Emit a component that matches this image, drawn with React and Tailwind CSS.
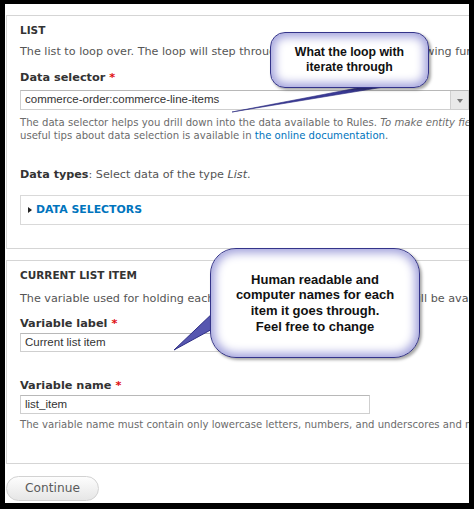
const body = "text-[11.2px] leading-[16px] text-[#555]";
const label = "text-[11.3px] font-bold leading-[16px] text-[#333]";
const title = "text-[10.5px] font-bold uppercase leading-[14px] text-[#333]";
const desc = "text-[10.1px] leading-[13px] text-[#6b6b6b] whitespace-nowrap";

function Required() {
  return <span className="text-[#e01010]"> *</span>;
}

function TextInput({ value, width }) {
  return (
    <div
      className={`${width} mt-px flex h-[19px] items-center border border-[#cfcfcf] border-t-[#b8b8b8] bg-white px-[4px] font-['Liberation_Sans',Arial,sans-serif] text-[11.5px] text-[#333]`}
    >
      {value}
    </div>
  );
}

function Callout({ className, children }) {
  return (
    <div
      className={`absolute flex items-center justify-center border-[1.5px] border-[#34348a] bg-white text-center font-['Liberation_Sans',Arial,sans-serif] font-bold text-[#111] shadow-[inset_0_0_10px_4px_#a3a3dc,2px_2px_3px_rgba(0,0,0,0.35)] ${className}`}
    >
      {children}
    </div>
  );
}

export default function App() {
  return (
    <div className="relative h-[509px] w-[474px] overflow-hidden bg-black pl-[5px] pt-[4px] font-['DejaVu_Sans',Verdana,sans-serif]">
      <div className="h-[499px] w-[464px] overflow-hidden bg-white">
        {/* LIST */}
        <div className="ml-px mt-[11px] w-[520px] border border-[#d5d5d5] px-[13px] pb-[23px] pt-[7px]">
          <div className={title}>List</div>
          <p className={`${body} mt-[7px] whitespace-nowrap`}>
            The list to loop over. The loop will step through each item in the list, allowing further actions on them.
          </p>
          <div className={`${label} mt-[10px]`}>
            Data selector<Required />
          </div>
          <div className="mt-[4px] flex h-[20px] w-[449px] border border-[#cfcfcf] border-t-[#b8b8b8] bg-white">
            <div className="flex flex-1 items-center px-[4px] font-['Liberation_Sans',Arial,sans-serif] text-[11.5px] text-[#333]">
              commerce-order:commerce-line-items
            </div>
            <div className="flex w-[18px] items-center justify-center border-l border-[#d0d0d0] bg-[#e9e9e9]">
              <span className="mt-px border-x-[3px] border-t-[4px] border-x-transparent border-t-[#777]" />
            </div>
          </div>
          <div className="mt-[6px]">
            <p className={desc}>
              The data selector helps you drill down into the data available to Rules.{" "}
              <em>To make entity fields appear in the data selector, you may have to use the condition 'entity has field'. More</em>
            </p>
            <p className={desc}>
              useful tips about data selection is available in{" "}
              <span className="text-[#0074bd]">the online documentation</span>.
            </p>
          </div>
          <p className={`${body} mt-[25px] whitespace-nowrap`}>
            <span className="font-bold text-[#333]">Data types</span>: Select data of the type <em>List</em>.
          </p>
          <div className="mt-[12px] flex h-[30px] w-[470px] items-center border border-[#d9d9d9] pl-[7px]">
            <span className="mr-[4px] border-y-[3px] border-l-[4px] border-y-transparent border-l-[#222]" />
            <span className="text-[10.9px] font-bold uppercase text-[#0074bd]">Data selectors</span>
          </div>
        </div>

        {/* CURRENT LIST ITEM */}
        <div className="ml-px mt-[11px] w-[520px] border border-[#d5d5d5] px-[13px] pb-[32px] pt-[7px]">
          <div className={title}>Current list item</div>
          <p className={`${body} mt-[9px] whitespace-nowrap`}>
            The variable used for holding each list item in the loop. This variable will be available inside the loop only.
          </p>
          <div className={`${label} mt-[9px]`}>
            Variable label<Required />
          </div>
          <TextInput value="Current list item" width="w-[350px]" />
          <div className={`${label} mt-[26px]`}>
            Variable name<Required />
          </div>
          <TextInput value="list_item" width="w-[350px]" />
          <p className={`${desc} mt-[4px]`}>
            The variable name must contain only lowercase letters, numbers, and underscores and must be unique in the current scope.
          </p>
        </div>

        <button className="ml-px mt-[12px] flex h-[25px] w-[93px] items-center justify-center rounded-full border border-[#d2d2d2] bg-gradient-to-b from-[#fdfdfd] to-[#e6e6e6] text-[12.2px] text-[#5a5a5a]">
          Continue
        </button>
      </div>

      {/* callout pointers */}
      <svg className="pointer-events-none absolute left-0 top-0" width="474" height="509" viewBox="0 0 474 509">
        <polygon points="378,84 402,84 232,112" fill="#3a3a96" stroke="#2c2c80" strokeWidth="0.6" />
        <polygon points="216,310 216,327 174,350" fill="#5656b0" stroke="#2e2e85" strokeWidth="1" />
      </svg>

      <Callout className="left-[270px] top-[32px] h-[56px] w-[159px] rounded-[15px] text-[12.3px] leading-[15px]">
        What the loop with
        <br />
        iterate through
      </Callout>
      <Callout className="left-[210px] top-[248px] h-[110px] w-[210px] rounded-[26px] text-[13px] leading-[15.6px]">
        Human readable and
        <br />
        computer names for each
        <br />
        item it goes through.
        <br />
        Feel free to change
      </Callout>
    </div>
  );
}
